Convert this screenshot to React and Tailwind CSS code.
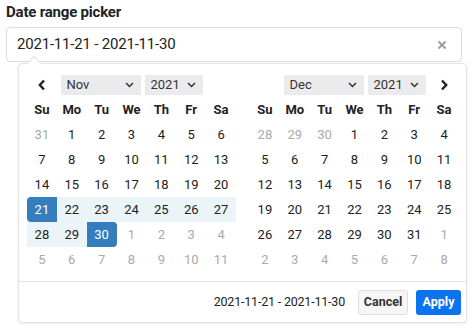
import React from "react";

const WD = ["Su", "Mo", "Tu", "We", "Th", "Fr", "Sa"];

function Chevron({ dir }) {
  return (
    <svg width="10" height="12" viewBox="0 0 10 12" fill="none">
      {dir === "left" ? (
        <path d="M7 1.5 L2.8 6 L7 10.5" stroke="#222" strokeWidth="2.4" strokeLinejoin="miter" />
      ) : (
        <path d="M3 1.5 L7.2 6 L3 10.5" stroke="#222" strokeWidth="2.4" strokeLinejoin="miter" />
      )}
    </svg>
  );
}

function SmallDown() {
  return (
    <svg width="9" height="6" viewBox="0 0 9 6" fill="none">
      <path d="M1 1 L4.5 4.5 L8 1" stroke="#333" strokeWidth="1.5" />
    </svg>
  );
}

function Select({ label, w }) {
  return (
    <div className={`flex items-center justify-between h-[20px] bg-[#ebebee] pl-[6px] pr-[7px] text-[13px] text-[#333] ${w}`}>
      <span>{label}</span>
      <SmallDown />
    </div>
  );
}

function Calendar({ month, weeks, side }) {
  return (
    <div className="w-[209px]">
      <div className="flex items-center h-[20px]">
        <div className="w-[30px] flex justify-center">{side === "left" && <Chevron dir="left" />}</div>
        <div className="flex-1 flex justify-center gap-[4px]">
          <Select label={month} w="w-[80px]" />
          <Select label="2021" w="w-[58px]" />
        </div>
        <div className="w-[30px] flex justify-center">{side === "right" && <Chevron dir="right" />}</div>
      </div>
      <div className="grid grid-cols-7 mt-[2px]">
        {WD.map((d) => (
          <div key={d} className="h-[25px] flex items-center justify-center text-[13px] font-bold text-[#222]">
            {d}
          </div>
        ))}
        {weeks.flat().map((c, i) => {
          let cls = "h-[25px] flex items-center justify-center text-[13px] ";
          if (c.t === "start") cls += "bg-[#357ebd] text-white rounded-l-[4px]";
          else if (c.t === "end") cls += "bg-[#357ebd] text-white rounded-r-[4px]";
          else if (c.t === "in") cls += "bg-[#ebf4f8] text-[#222]";
          else if (c.t === "off") cls += "text-[#aaa]";
          else cls += "text-[#222]";
          return (
            <div key={i} className={cls}>
              {c.d}
            </div>
          );
        })}
      </div>
    </div>
  );
}

function build(days) {
  const weeks = [];
  for (let i = 0; i < days.length; i += 7) weeks.push(days.slice(i, i + 7));
  return weeks;
}

const novDays = [];
novDays.push({ d: 31, t: "off" });
for (let d = 1; d <= 30; d++) {
  let t = "";
  if (d === 21) t = "start";
  else if (d === 30) t = "end";
  else if (d > 21 && d < 30) t = "in";
  novDays.push({ d, t });
}
for (let d = 1; d <= 11; d++) novDays.push({ d, t: "off" });

const decDays = [];
[28, 29, 30].forEach((d) => decDays.push({ d, t: "off" }));
for (let d = 1; d <= 31; d++) decDays.push({ d, t: "" });
for (let d = 1; d <= 8; d++) decDays.push({ d, t: "off" });

export default function App() {
  return (
    <div className="w-[474px] h-[330px] bg-white px-[6px] pt-[1px]" style={{ fontFamily: "Roboto, 'Noto Sans', sans-serif" }}>
      <div className="text-[15px] font-bold text-[#222] h-[22px] leading-[22px] tracking-[-0.2px]">Date range picker</div>
      <div className="mt-[4px] w-[456px] h-[35px] border border-[#dcdcdc] rounded-[4px] flex items-center pl-[10px] pr-[14px] justify-between">
        <span className="text-[15px] text-[#222] tracking-[-0.2px]">2021-11-21 - 2021-11-30</span>
        <svg width="10" height="10" viewBox="0 0 10 10">
          <path d="M1.5 1.5 L8.5 8.5 M8.5 1.5 L1.5 8.5" stroke="#999" strokeWidth="1.8" />
        </svg>
      </div>
      <div className="relative ml-[12px] mt-[1px] w-[449px] border border-[#e2e2e2] rounded-[4px] bg-white shadow-[0_1px_3px_rgba(0,0,0,0.08)]">
        <div className="absolute left-[10px] -top-[6px] w-[10px] h-[10px] rotate-45 bg-white border-l border-t border-[#e2e2e2]" />
        <div className="flex pl-[8px] pt-[11px] pb-[9px] gap-[14px]">
          <Calendar month="Nov" weeks={build(novDays)} side="left" />
          <Calendar month="Dec" weeks={build(decDays)} side="right" />
        </div>
        <div className="border-t border-[#e4e4e4] h-[41px] flex items-center justify-end pr-[5px]">
          <span className="text-[12.5px] text-[#222] mr-[13px] tracking-[-0.2px]">2021-11-21 - 2021-11-30</span>
          <button className="h-[25px] w-[50px] rounded-[3px] border border-[#e0e0e0] bg-[#f6f6f6] text-[12.5px] font-bold text-[#333]">Cancel</button>
          <button className="ml-[8px] h-[25px] w-[45px] rounded-[3px] bg-[#0b73ee] text-[12.5px] font-bold text-white">Apply</button>
        </div>
      </div>
    </div>
  );
}
